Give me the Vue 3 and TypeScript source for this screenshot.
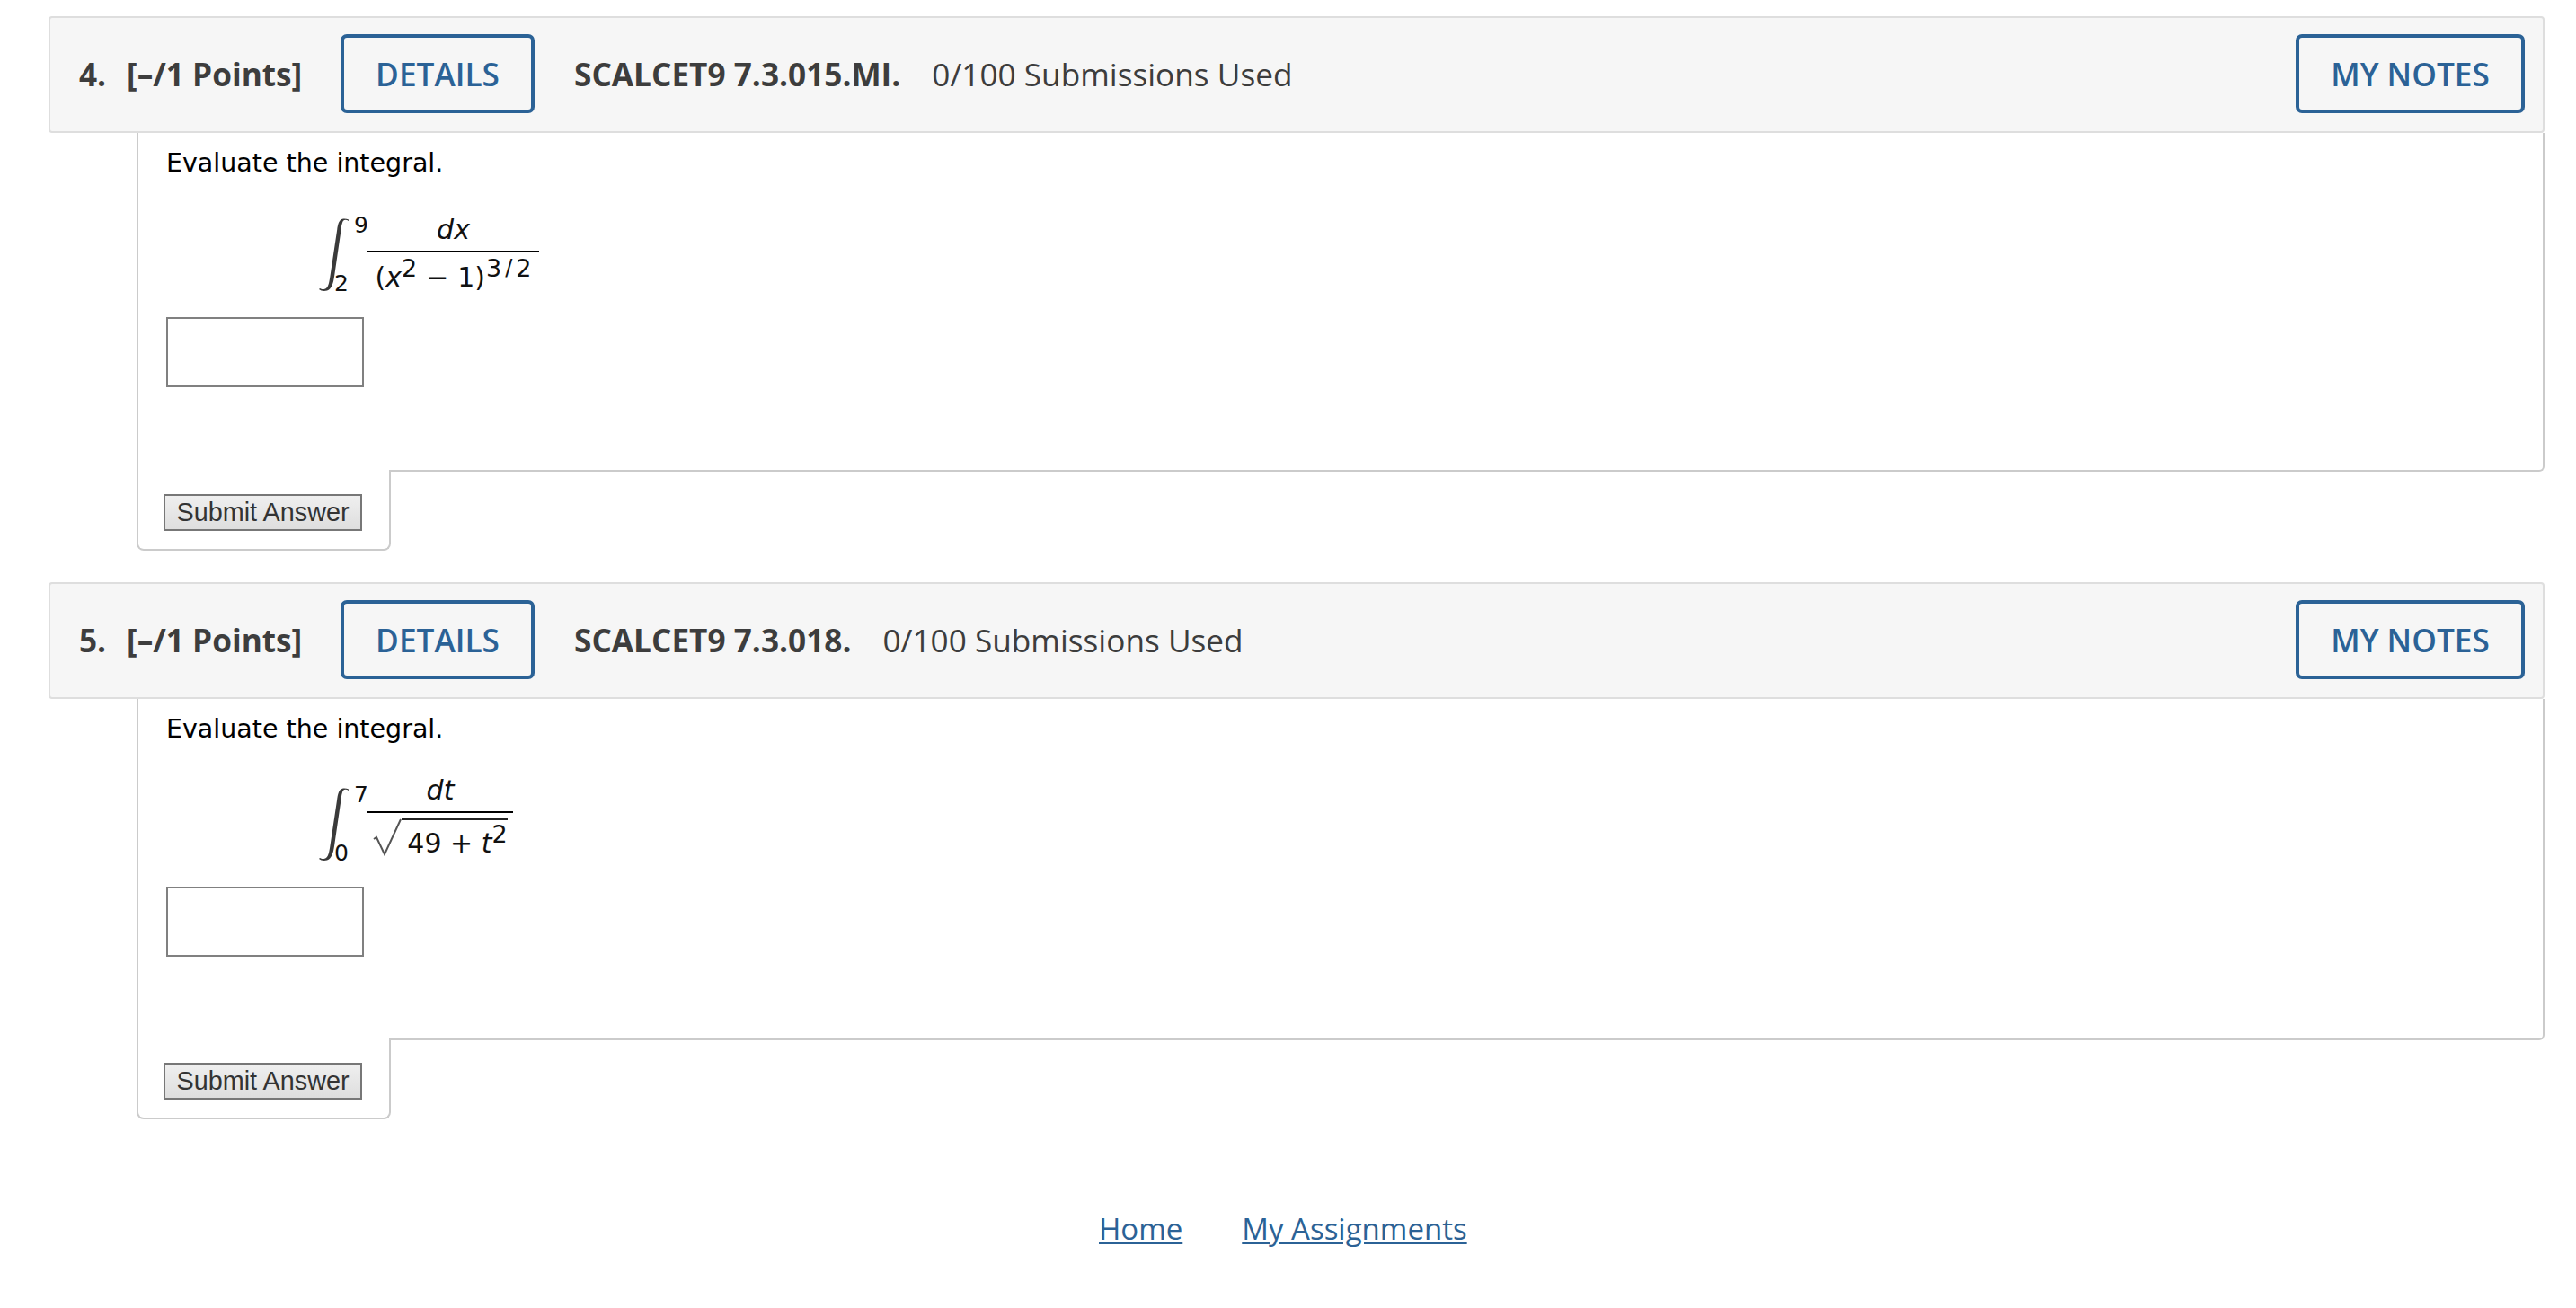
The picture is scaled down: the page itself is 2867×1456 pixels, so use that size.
<script setup lang="ts">
interface Question {
  num: number
  code: string
  kind: 'a' | 'b'
}
const questions: Question[] = [
  { num: 4, code: 'SCALCET9 7.3.015.MI.', kind: 'a' },
  { num: 5, code: 'SCALCET9 7.3.018.', kind: 'b' },
]
</script>

<template>
  <div class="page">
    <section v-for="q in questions" :key="q.num" class="question">
      <header class="head">
        <span class="num">{{ q.num }}.</span>
        <span class="pts">[–/1 Points]</span>
        <button class="outline details">DETAILS</button>
        <span class="code">{{ q.code }}</span>
        <span class="subs">0/100 Submissions Used</span>
        <button class="outline notes">MY NOTES</button>
      </header>
      <div class="body" :class="'body-' + q.kind">
        <p class="prompt">Evaluate the integral.</p>
        <div class="formula" :class="'formula-' + q.kind">
          <div class="integral">
            <svg class="int-sign" width="33" height="82" viewBox="0 0 33 82">
              <path d="M33 3 C30 1 27 1 26 5 C25 8 24.500 12 24 17 L17 65 C16 72 14 79 9 80.500 C6 81.500 2 81 0 79 L1 78 C3 79.500 6 79.500 8 78 C10.500 76 11.500 71 12.500 64 L20 14 C21 7 22 2 26 .8 C28 .2 31 .5 33 1.500 Z" fill="#3a3a3a" />
            </svg>
            <span class="lim upper">{{ q.kind === 'a' ? '9' : '7' }}</span>
            <span class="lim lower">{{ q.kind === 'a' ? '2' : '0' }}</span>
          </div>
          <div class="frac">
            <div class="numer"><i>{{ q.kind === 'a' ? 'dx' : 'dt' }}</i></div>
            <div class="bar"></div>
            <div v-if="q.kind === 'a'" class="denom">(<i>x</i><span class="sup">2</span><span class="minus">−</span>1)<span class="sup power">3<span class="slash">/</span>2</span></div>
            <div v-else class="denom root">
              <svg class="radical" width="32" height="42" viewBox="0 0 32 42">
                <path d="M1 23 L4 21 L13 40 L31 1" fill="none" stroke="#555" stroke-width="2" />
              </svg>
              <span class="radicand">49 + <i>t</i><span class="sup">2</span></span>
            </div>
          </div>
        </div>
        <div class="answer"></div>
      </div>
      <div class="tab">
        <button class="submit">Submit Answer</button>
      </div>
    </section>
    <nav class="footer">
      <a href="#">Home</a>
      <a href="#">My Assignments</a>
    </nav>
  </div>
</template>

<style>
html, body { margin: 0; background: #fff; }
</style>

<style scoped>
.page {
  box-sizing: border-box;
  width: 2867px;
  height: 1456px;
  overflow: hidden;
  padding: 18px 35px 0 54px;
  font-family: "Open Sans", sans-serif;
  color: #3d3d3d;
}
.question { margin-bottom: 35px; }
.head {
  box-sizing: border-box;
  height: 130px;
  display: flex;
  align-items: center;
  padding: 0 20px 2px 32px;
  background: #f6f6f6;
  border: 2px solid #dedede;
  border-radius: 4px;
  font-size: 35.2px;
}
.num { font-weight: 700; width: 53px; }
.pts { font-weight: 700; width: 238px; }
.code { font-weight: 700; margin-left: 44px; margin-right: 35px; }
.outline {
  box-sizing: border-box;
  height: 88px;
  background: transparent;
  border: 4px solid #2b6296;
  border-radius: 7px;
  color: #2b6296;
  font: 600 35.2px "Open Sans", sans-serif;
  padding: 0;
}
.details { width: 216px; }
.notes { width: 255px; margin-left: auto; }
.body {
  box-sizing: border-box;
  margin-left: 98px;
  padding: 18px 0 0 31px;
  border: solid #cbcbcb;
  border-width: 0 2px 2px 2px;
  border-radius: 0 0 6px 0;
  color: #000;
}
.body-a { height: 377px; }
.body-b { height: 380px; }
.prompt {
  margin: 0;
  font: 28.5px/32px "DejaVu Sans", sans-serif;
}
.formula {
  display: flex;
  margin-left: 170px;
  font-family: "DejaVu Sans", sans-serif;
  font-size: 30px;
  color: #111;
}
.formula-a { margin-top: 45px; height: 110px; }
.formula-b { margin-top: 49px; height: 110px; }
.integral { position: relative; width: 54px; height: 82px; flex: none; }
.int-sign { display: block; }
.lim { position: absolute; font-size: 25px; line-height: 25px; }
.upper { left: 39px; top: -5px; }
.lower { left: 17px; top: 60px; }
.frac { flex: none; display: flex; flex-direction: column; align-items: center; }
.formula-a .frac { width: 191px; }
.formula-b .frac { width: 162px; }
.numer { line-height: 30px; height: 30px; margin-top: -2px; margin-bottom: 8px; }
.formula-b .numer { margin-top: -12px; }
.bar { height: 2px; width: 100%; background: #000; flex: none; }
.denom { line-height: 34px; white-space: nowrap; margin-top: 11px; }
.sup { font-size: 27px; position: relative; top: -11px; }
.minus { margin: 0 10px; }
.power { margin-left: 1px; }
.slash { font-size: 24px; margin: 0 4px; position: relative; top: -2px; }
.root { display: flex; align-items: flex-start; margin-top: 6px; }
.radical { display: block; flex: none; }
.radicand { border-top: 2px solid #222; padding: 7px 0 0 6px; line-height: 38px; }
.answer {
  box-sizing: border-box;
  width: 220px;
  height: 78px;
  border: 2px solid #808080;
  background: #fff;
}
.tab {
  box-sizing: border-box;
  width: 283px;
  height: 90px;
  margin: -2px 0 0 98px;
  padding: 27px 0 0 28px;
  position: relative;
  background: #fff;
  border: solid #cbcbcb;
  border-width: 0 2px 2px 2px;
  border-radius: 0 0 8px 8px;
}
.submit {
  display: block;
  box-sizing: border-box;
  width: 221px;
  height: 41px;
  padding: 0;
  border: 2px solid #777;
  border-radius: 0;
  background: linear-gradient(#efefef, #dedede);
  color: #333;
  font: 28.8px "Liberation Sans", Arial, sans-serif;
  white-space: nowrap;
}
.footer {
  display: flex;
  gap: 66px;
  margin: 98px 0 0 1169px;
  font-size: 33px;
  line-height: 48px;
}
.footer a { color: #2b6296; }
</style>
